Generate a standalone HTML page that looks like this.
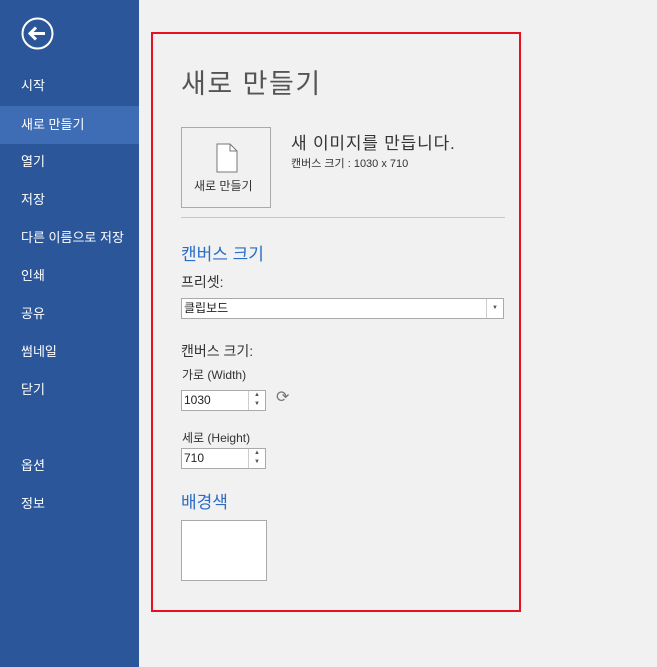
<!DOCTYPE html>
<html><head><meta charset="utf-8"><style>
*{margin:0;padding:0;box-sizing:border-box}
body{width:657px;height:667px;background:#f1f1f1;font-family:"Liberation Sans","Noto Sans CJK KR",sans-serif;position:relative;overflow:hidden;color:#333}
.side{position:absolute;left:0;top:0;width:139px;height:667px;background:#2b579a}
.side div{position:absolute;left:0;width:139px;height:38px;line-height:38px;padding-left:21px;color:#fff;font-size:13px}
.side .sel{background:#3e6db5}
.a{position:absolute}
.red{position:absolute;left:151px;top:32px;width:370px;height:580px;border:2px solid #e81123}
.blue{color:#2b6cc4}
.inp{position:absolute;background:#fff;border:1px solid #aaa;font-size:12px;padding-left:2px;line-height:18px;color:#222}
.spin{position:absolute;right:0;top:0;width:17px;height:100%;border-left:1px solid #ccc;font-size:6px;line-height:9px;text-align:center;color:#555}
</style></head><body>
<div class="side">
<svg class="a" style="left:21px;top:17px" width="33" height="33" viewBox="0 0 33 33"><circle cx="16.5" cy="16.5" r="15" fill="none" stroke="#fff" stroke-width="2"/><path d="M9 16.5h15M15 10.5l-6 6 6 6" fill="none" stroke="#fff" stroke-width="3"/></svg>
<div style="top:67px">시작</div>
<div class="sel" style="top:106px">새로 만들기</div>
<div style="top:143px">열기</div>
<div style="top:181px">저장</div>
<div style="top:219px">다른 이름으로 저장</div>
<div style="top:257px">인쇄</div>
<div style="top:295px">공유</div>
<div style="top:333px">썸네일</div>
<div style="top:371px">닫기</div>
<div style="top:447px">옵션</div>
<div style="top:485px">정보</div>
</div>
<div class="red"></div>
<div class="a" style="left:181px;top:62px;font-size:27px;color:#555;letter-spacing:1.5px">새로 만들기</div>
<div class="a" style="left:181px;top:127px;width:90px;height:81px;border:1px solid #aaa"></div>
<svg class="a" style="left:216px;top:143px" width="22" height="30" viewBox="0 0 22 30"><path d="M1 1h13l7 7v21H1z" fill="#fff" stroke="#777"/><path d="M14 1v7h7" fill="none" stroke="#777"/></svg>
<div class="a" style="left:194px;top:177px;font-size:12px;color:#333">새로 만들기</div>
<div class="a" style="left:291px;top:129px;font-size:17px;color:#333;letter-spacing:0.8px">새 이미지를 만듭니다.</div>
<div class="a" style="left:291px;top:155px;font-size:11px;color:#333">캔버스 크기 : 1030 x 710</div>
<div class="a" style="left:181px;top:217px;width:324px;height:1px;background:#c8c8c8"></div>
<div class="a blue" style="left:181px;top:240px;font-size:17px">캔버스 크기</div>
<div class="a" style="left:181px;top:272px;font-size:14px;color:#333">프리셋:</div>
<div class="inp" style="left:181px;top:298px;width:323px;height:21px">클립보드<div class="spin" style="line-height:19px">▼</div></div>
<div class="a" style="left:181px;top:341px;font-size:14px;color:#333">캔버스 크기:</div>
<div class="a" style="left:182px;top:366px;font-size:12px;color:#333">가로 (Width)</div>
<div class="inp" style="left:181px;top:390px;width:85px;height:21px">1030<div class="spin">▲<br>▼</div></div>
<div class="a" style="left:276px;top:387px;font-size:16px;color:#777">⟳</div>
<div class="a" style="left:182px;top:429px;font-size:12px;color:#333">세로 (Height)</div>
<div class="inp" style="left:181px;top:448px;width:85px;height:21px">710<div class="spin">▲<br>▼</div></div>
<div class="a blue" style="left:181px;top:488px;font-size:17px">배경색</div>
<div class="a" style="left:181px;top:520px;width:86px;height:61px;background:#fff;border:1px solid #aaa"></div>
</body></html>
